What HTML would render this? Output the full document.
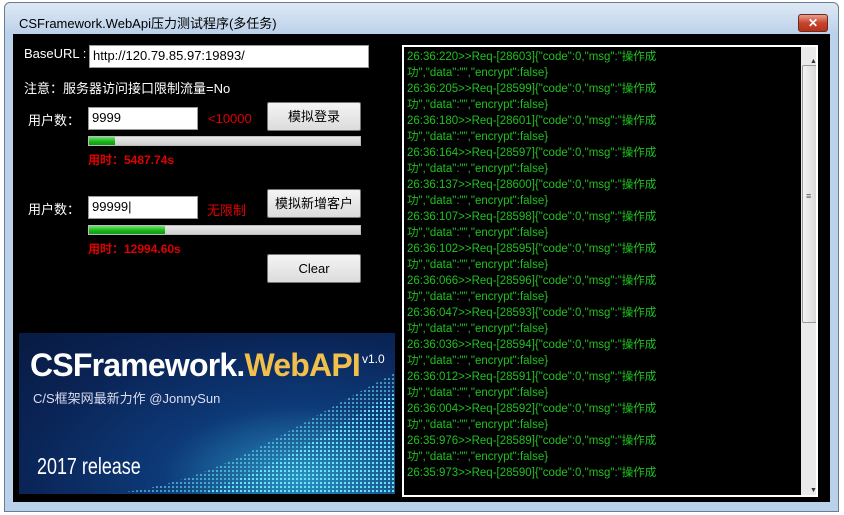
<!DOCTYPE html>
<html><head><meta charset="utf-8"><style>
*{margin:0;padding:0;box-sizing:border-box}
body{width:844px;height:515px;background:#fff;position:relative;overflow:hidden;font-family:"Liberation Sans","Noto Sans CJK SC",sans-serif;font-size:12px}
.win{position:absolute;left:4px;top:2px;width:835px;height:510px;background:linear-gradient(#dfe9f5,#bcd2ea 30px,#b9d1ea);border:1px solid #6a7d93;border-radius:6px 6px 0 0}
.title{position:absolute;left:14px;top:10px;font-size:13px;color:#000}
.close{position:absolute;left:793px;top:11px;width:30px;height:18px;background:linear-gradient(#e8a090,#c7442c 50%,#b8301a);border:1px solid #6b2a20;border-radius:3px;color:#fff;font-weight:bold;text-align:center;line-height:16px;font-size:12px}
.client{position:absolute;left:13px;top:34px;width:817px;height:468px;background:#000}
.a{position:absolute;white-space:nowrap}
.in{position:absolute;background:#fff;border:1px solid #999;font-size:13px;padding-left:3px;line-height:20px;color:#000}
.btn{position:absolute;background:linear-gradient(#f4f4f4,#dcdcdc);border:1px solid #777;border-radius:2px;text-align:center;font-size:13px;color:#000}
.pb{position:absolute;height:10px;background:linear-gradient(#e8e8e8,#cfcfcf);border:1px solid #bbb}
.pb i{display:block;height:100%;background:linear-gradient(#6fe36f,#16b316 60%,#0e9a0e)}
.red{color:#e00000}
.log{position:absolute;left:402px;top:45px;width:416px;height:452px;border:2px solid #fff;background:#000;overflow:hidden;padding-top:2px}
.log div{color:#1fc21f;font-size:11.5px;line-height:16px;padding-left:3px;white-space:nowrap}
.sb{position:absolute;left:397px;top:0;width:17px;height:448px;background:#eaeaea}
.banner{position:absolute;left:19px;top:333px;width:376px;height:161px;background:radial-gradient(ellipse at 75% 90%,#2a8fc0 0%,#0d3a78 35%,#0a2456 70%,#081b42 100%);overflow:hidden}
</style></head><body>
<div class="win">
<div class="title">CSFramework.WebApi压力测试程序(多任务)</div>
<div class="close">✕</div>
</div>
<div class="client"></div>
<div class="a" style="left:24px;top:46px;color:#fff;font-size:13px">BaseURL :</div>
<div class="in" style="left:89px;top:45px;width:280px;height:23px">http://120.79.85.97:19893/</div>
<div class="a" style="left:24px;top:78px;color:#fff;font-size:13px">注意：服务器访问接口限制流量=No</div>
<div class="a" style="left:28px;top:110px;color:#fff;font-size:13px">用户数：</div>
<div class="in" style="left:88px;top:107px;width:110px;height:23px">9999</div>
<div class="a red" style="left:208px;top:111px;font-size:13px">&lt;10000</div>
<div class="btn" style="left:267px;top:102px;width:94px;height:29px;line-height:27px">模拟登录</div>
<div class="pb" style="left:88px;top:136px;width:273px"><i style="width:26px"></i></div>
<div class="a red" style="left:88px;top:151px;font-size:12px;font-weight:bold">用时：5487.74s</div>
<div class="a" style="left:28px;top:199px;color:#fff;font-size:13px">用户数：</div>
<div class="in" style="left:88px;top:196px;width:110px;height:23px">99999|</div>
<div class="a red" style="left:207px;top:200px;font-size:13px">无限制</div>
<div class="btn" style="left:267px;top:189px;width:94px;height:29px;line-height:27px">模拟新增客户</div>
<div class="pb" style="left:88px;top:225px;width:273px"><i style="width:76px"></i></div>
<div class="a red" style="left:88px;top:240px;font-size:12px;font-weight:bold">用时：12994.60s</div>
<div class="btn" style="left:267px;top:254px;width:94px;height:29px;line-height:27px">Clear</div>
<div class="banner">
<svg width="376" height="161" style="position:absolute;left:0;top:0"><defs><pattern id="d" width="4" height="4" patternUnits="userSpaceOnUse"><circle cx="2" cy="2" r="1.1" fill="#6ff0ff"/></pattern></defs>
<path d="M90 161 C200 150 260 100 376 40 L376 161 Z" fill="url(#d)" opacity=".6"/>
<path d="M180 161 C260 135 320 90 376 60 L376 161Z" fill="url(#d)" opacity=".9"/></svg>
<div class="a" style="left:11px;top:14px;color:#fff;font-size:32px;font-weight:bold;letter-spacing:-0.8px">CSFramework.<span style="color:#f2c04a">WebAPI</span></div>
<div class="a" style="left:343px;top:19px;color:#fff;font-size:12px">v1.0</div>
<div class="a" style="left:14px;top:55px;color:#dde;font-size:13px">C/S框架网最新力作 @JonnySun</div>
<div class="a" style="left:18px;top:120px;color:#fff;font-size:23px;transform:scaleX(.78);transform-origin:left">2017 release</div>
</div>
<div class="log">
<div>26:36:220&gt;&gt;Req-[28603]{"code":0,"msg":"操作成</div><div>功","data":"","encrypt":false}</div>
<div>26:36:205&gt;&gt;Req-[28599]{"code":0,"msg":"操作成</div><div>功","data":"","encrypt":false}</div>
<div>26:36:180&gt;&gt;Req-[28601]{"code":0,"msg":"操作成</div><div>功","data":"","encrypt":false}</div>
<div>26:36:164&gt;&gt;Req-[28597]{"code":0,"msg":"操作成</div><div>功","data":"","encrypt":false}</div>
<div>26:36:137&gt;&gt;Req-[28600]{"code":0,"msg":"操作成</div><div>功","data":"","encrypt":false}</div>
<div>26:36:107&gt;&gt;Req-[28598]{"code":0,"msg":"操作成</div><div>功","data":"","encrypt":false}</div>
<div>26:36:102&gt;&gt;Req-[28595]{"code":0,"msg":"操作成</div><div>功","data":"","encrypt":false}</div>
<div>26:36:066&gt;&gt;Req-[28596]{"code":0,"msg":"操作成</div><div>功","data":"","encrypt":false}</div>
<div>26:36:047&gt;&gt;Req-[28593]{"code":0,"msg":"操作成</div><div>功","data":"","encrypt":false}</div>
<div>26:36:036&gt;&gt;Req-[28594]{"code":0,"msg":"操作成</div><div>功","data":"","encrypt":false}</div>
<div>26:36:012&gt;&gt;Req-[28591]{"code":0,"msg":"操作成</div><div>功","data":"","encrypt":false}</div>
<div>26:36:004&gt;&gt;Req-[28592]{"code":0,"msg":"操作成</div><div>功","data":"","encrypt":false}</div>
<div>26:35:976&gt;&gt;Req-[28589]{"code":0,"msg":"操作成</div><div>功","data":"","encrypt":false}</div>
<div>26:35:973&gt;&gt;Req-[28590]{"code":0,"msg":"操作成</div>
<div class="sb">
<div style="position:absolute;left:6px;top:7px;font-size:7px;color:#333">▲</div>
<div style="position:absolute;left:1px;top:18px;width:15px;height:258px;background:linear-gradient(90deg,#f4f4f4,#d8d8d8);border:1px solid #999;border-radius:2px"><span style="position:absolute;left:3px;top:122px;font-size:9px;color:#555">≡</span></div>
<div style="position:absolute;left:6px;top:436px;font-size:7px;color:#333">▼</div>
</div>
</div>
</body></html>
